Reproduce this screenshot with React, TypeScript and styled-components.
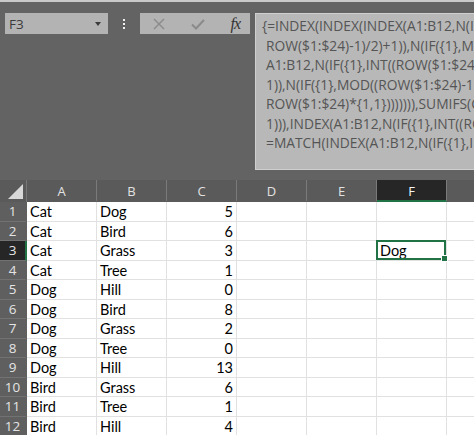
import styled, { createGlobalStyle } from 'styled-components';

const Global = createGlobalStyle`
  html, body {
    margin: 0;
    padding: 0;
    background: #636363;
  }
`;

const Page = styled.div`
  width: 474px;
  height: 435px;
  overflow: hidden;
  background: #636363;
  border-top: 2px solid #c9c9c9;
  box-sizing: border-box;
`;

const Toolbar = styled.div`
  display: flex;
  align-items: flex-start;
  padding: 11px 0 0 5px;
  height: 178px;
  box-sizing: border-box;
  & > * {
    flex-shrink: 0;
  }
`;

const NameBox = styled.div`
  width: 103px;
  height: 21px;
  background: #b3b3b3;
  display: flex;
  align-items: center;
  justify-content: space-between;
  padding: 0 7px 0 4px;
  box-sizing: border-box;
  font-family: 'Open Sans', sans-serif;
  font-size: 13.5px;
  color: #3c3c3c;
`;

const Caret = styled.span`
  width: 0;
  height: 0;
  border-left: 3px solid transparent;
  border-right: 3px solid transparent;
  border-top: 4px solid #3c3c3c;
`;

const Grip = styled.div`
  width: 32px;
  height: 21px;
  display: flex;
  flex-direction: column;
  align-items: center;
  justify-content: center;
  gap: 2px;
`;

const Dot = styled.span`
  width: 2px;
  height: 2px;
  background: #f0f0f0;
`;

const FxButtons = styled.div`
  width: 110px;
  height: 21px;
  background: #b3b3b3;
  display: flex;
  align-items: center;
  justify-content: space-between;
  padding: 0 10px 0 12px;
  box-sizing: border-box;
`;

const Fx = styled.span`
  font-family: 'Liberation Serif', serif;
  font-style: italic;
  font-size: 16px;
  color: #333;
  letter-spacing: -1px;
`;

const FormulaBox = styled.div`
  margin-left: 5px;
  width: 260px;
  height: 157px;
  background: #b8b8b8;
  border: 1px solid #cfcfcf;
  border-right: none;
  box-sizing: border-box;
  padding: 2px 0 0 6px;
  overflow: hidden;
  font-family: 'Open Sans', sans-serif;
  font-size: 13.8px;
  line-height: 19.5px;
  color: #555;
`;

const FormulaLine = styled.div<{ $indent?: boolean }>`
  white-space: nowrap;
  padding-left: ${(p) => (p.$indent ? '4px' : '0')};
`;

const Sheet = styled.div`
  display: grid;
  grid-template-columns: 27px repeat(7, 70px);
  grid-template-rows: 22px repeat(12, 19.5px);
`;

const Corner = styled.div`
  background: #5a5a5a;
  border-right: 1px solid #777;
  position: relative;
  box-sizing: border-box;
  &::after {
    content: '';
    position: absolute;
    right: 3px;
    bottom: 3px;
    border-left: 15px solid transparent;
    border-bottom: 15px solid #d8d8d8;
  }
`;

const ColHead = styled.div<{ $active?: boolean }>`
  background: ${(p) => (p.$active ? '#262626' : '#5a5a5a')};
  border-right: 1px solid #7a7a7a;
  border-bottom: 2px solid ${(p) => (p.$active ? '#217346' : '#5a5a5a')};
  box-sizing: border-box;
  display: flex;
  align-items: center;
  justify-content: center;
  font-family: 'Open Sans', sans-serif;
  font-size: 13px;
  color: ${(p) => (p.$active ? '#f4f4f4' : '#e2e2e2')};
  padding-top: 2px;
`;

const RowHead = styled.div<{ $active?: boolean }>`
  background: ${(p) => (p.$active ? '#262626' : '#5f5f5f')};
  border-bottom: 1px solid #727272;
  border-right: 2px solid ${(p) => (p.$active ? '#217346' : '#5f5f5f')};
  box-sizing: border-box;
  display: flex;
  align-items: center;
  justify-content: center;
  font-family: 'Open Sans', sans-serif;
  font-size: 13.5px;
  color: #e4e4e4;
`;

const Cell = styled.div<{ $num?: boolean }>`
  background: #fff;
  border-right: 1px solid #e1e1e1;
  border-bottom: 1px solid #e1e1e1;
  box-sizing: border-box;
  display: flex;
  align-items: center;
  justify-content: ${(p) => (p.$num ? 'flex-end' : 'flex-start')};
  padding: 1px 3px 0 3px;
  font-family: 'Lato', sans-serif;
  font-size: 14.5px;
  color: #000;
  white-space: nowrap;
  position: relative;
`;

const Selected = styled.div`
  position: absolute;
  inset: -1px 0 0 -1px;
  border: 2px solid #217346;
  pointer-events: none;
  z-index: 2;
  &::after {
    content: '';
    position: absolute;
    right: -4px;
    bottom: -4px;
    width: 5px;
    height: 5px;
    background: #217346;
    border: 1px solid #fff;
  }
`;

const rows: [string, string, number][] = [
  ['Cat', 'Dog', 5],
  ['Cat', 'Bird', 6],
  ['Cat', 'Grass', 3],
  ['Cat', 'Tree', 1],
  ['Dog', 'Hill', 0],
  ['Dog', 'Bird', 8],
  ['Dog', 'Grass', 2],
  ['Dog', 'Tree', 0],
  ['Dog', 'Hill', 13],
  ['Bird', 'Grass', 6],
  ['Bird', 'Tree', 1],
  ['Bird', 'Hill', 4],
];

const formula = [
  '{=INDEX(INDEX(INDEX(A1:B12,N(IF({1},INT((',
  'ROW($1:$24)-1)/2)+1)),N(IF({1},MOD((ROW(',
  'A1:B12,N(IF({1},INT((ROW($1:$24)-1)/2)+',
  '1)),N(IF({1},MOD((ROW($1:$24)-1),2)+1)',
  'ROW($1:$24)*{1,1}))))))),SUMIFS(C1:C12,',
  '1))),INDEX(A1:B12,N(IF({1},INT((ROW($1:',
  '=MATCH(INDEX(A1:B12,N(IF({1},INT((ROW(',
];

const columns = ['A', 'B', 'C', 'D', 'E', 'F', 'G'];

function App() {
  return (
    <Page>
      <Global />
      <Toolbar>
        <NameBox>
          F3
          <Caret />
        </NameBox>
        <Grip>
          <Dot />
          <Dot />
          <Dot />
        </Grip>
        <FxButtons>
          <svg width="14" height="14" viewBox="0 0 14 14">
            <path d="M2 2 L12 12 M12 2 L2 12" stroke="#8a8a8a" strokeWidth="1.4" fill="none" />
          </svg>
          <svg width="16" height="14" viewBox="0 0 16 14">
            <path d="M2 7.5 L6 11.5 L14 3" stroke="#8a8a8a" strokeWidth="2" fill="none" />
          </svg>
          <Fx>fx</Fx>
        </FxButtons>
        <FormulaBox>
          {formula.map((line, i) => (
            <FormulaLine key={i} $indent={i > 0}>
              {line}
            </FormulaLine>
          ))}
        </FormulaBox>
      </Toolbar>
      <Sheet>
        <Corner />
        {columns.map((c) => (
          <ColHead key={c} $active={c === 'F'}>
            {c}
          </ColHead>
        ))}
        {rows.map(([a, b, n], i) => {
          const r = i + 1;
          return [
            <RowHead key={`h${r}`} $active={r === 3}>
              {r}
            </RowHead>,
            <Cell key={`a${r}`}>{a}</Cell>,
            <Cell key={`b${r}`}>{b}</Cell>,
            <Cell key={`c${r}`} $num>
              {n}
            </Cell>,
            <Cell key={`d${r}`} />,
            <Cell key={`e${r}`} />,
            <Cell key={`f${r}`}>
              {r === 3 && 'Dog'}
              {r === 3 && <Selected />}
            </Cell>,
            <Cell key={`g${r}`} />,
          ];
        })}
      </Sheet>
    </Page>
  );
}

export default App;
